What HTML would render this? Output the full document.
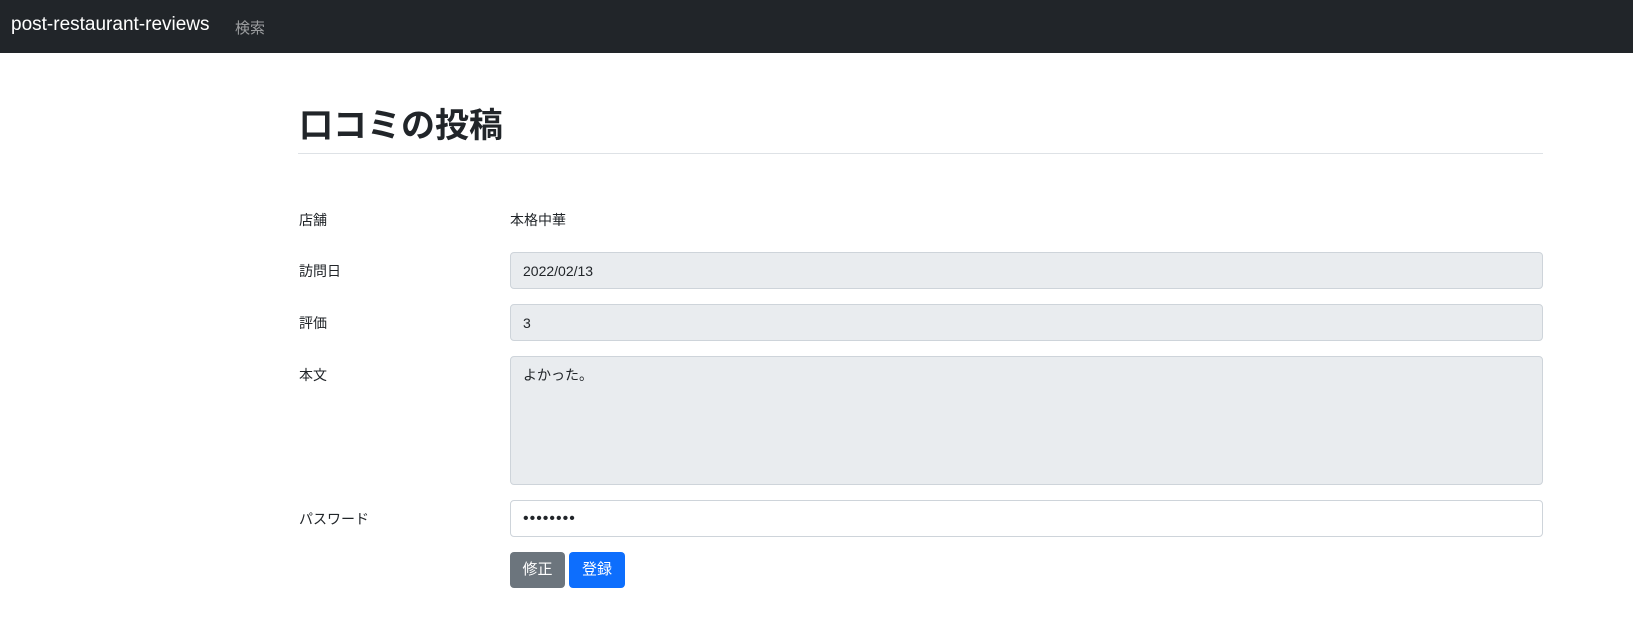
<!DOCTYPE html>
<html><head><meta charset="utf-8"><style>
*{box-sizing:border-box;margin:0;padding:0}
body{width:1633px;height:641px;background:#fff;font-family:"Liberation Sans","Noto Sans CJK JP",sans-serif;color:#212529;font-size:15px;position:relative;overflow:hidden}
.nav{position:absolute;left:0;top:0;width:1633px;height:53px;background:#212529}
.brand{position:absolute;left:11px;top:14px;font-size:19px;color:#fff}
.nl{position:absolute;left:235px;top:17px;font-size:15px;color:rgba(255,255,255,.55)}
h1{position:absolute;left:299px;top:100px;font-size:34px;font-weight:700;line-height:52px}
.hr{position:absolute;left:298px;top:153px;width:1245px;height:1px;background:#dee2e6}
.lbl{position:absolute;left:299px;font-size:14px}
.val{position:absolute;left:510px;font-size:14px}
.inp{position:absolute;left:510px;width:1033px;height:37px;border:1px solid #ced4da;border-radius:4px;background:#e9ecef;padding:8px 12px;font-size:14px;line-height:20px}
.btn{position:absolute;top:552px;height:36px;border-radius:4px;color:#fff;font-size:15px;line-height:36px;text-align:center}
</style></head><body>
<div class="nav"><span class="brand">post-restaurant-reviews</span><span class="nl">検索</span></div>
<h1>口コミの投稿</h1>
<div class="hr"></div>
<div class="lbl" style="top:210px">店舗</div><div class="val" style="top:210px">本格中華</div>
<div class="lbl" style="top:261px">訪問日</div><div class="inp" style="top:252px">2022/02/13</div>
<div class="lbl" style="top:313px">評価</div><div class="inp" style="top:304px">3</div>
<div class="lbl" style="top:365px">本文</div><div class="inp" style="top:356px;height:129px">よかった。</div>
<div class="lbl" style="top:509px">パスワード</div><div class="inp" style="top:500px;background:#fff;font-size:16px;letter-spacing:1px">••••••••</div>
<div class="btn" style="left:510px;width:55px;background:#6c757d">修正</div>
<div class="btn" style="left:569px;width:56px;background:#0d6efd">登録</div>
</body></html>
